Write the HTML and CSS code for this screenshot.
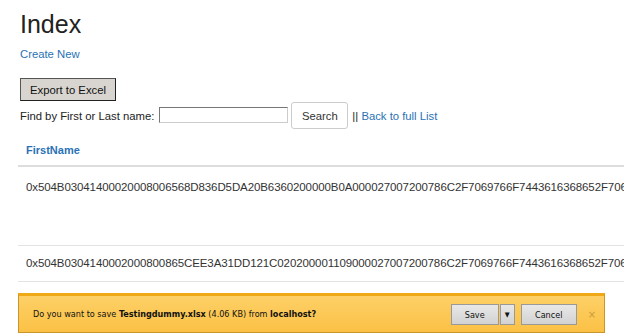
FILE: index.html
```html
<!DOCTYPE html>
<html>
    <head>
        <title>Index</title>
        <link rel="stylesheet" href="styles.css">
    </head>
    <body>
        <div class="body-content">
            <h2 class="title">Index</h2>
            <p class="create"><a href="#">Create New</a></p>

            <form class="export-form">
                <button type="button" class="export-btn">Export to Excel</button>
            </form>
            <form class="search-form">
                <span>Find by First or Last name:</span>
                <input type="text" class="search-box">
                <button type="button" class="search-btn">Search</button>
                <span class="sep">|| <a href="#">Back to full List</a></span>
            </form>

            <table class="grid">
                <tr>
                    <th><a href="#">FirstName</a></th>
                </tr>
                <tr class="first">
                    <td>0x504B03041400020008006568D836D5DA20B6360200000B0A000027007200786C2F7069766F7443616368652F7069766F7443616368654465</td>
                </tr>
                <tr class="second">
                    <td>0x504B0304140002000800865CEE3A31DD121C020200001109000027007200786C2F7069766F7443616368652F7069766F7443616368654465</td>
                </tr>
            </table>
        </div>

        <div class="notify">
            <div class="notify-text">Do you want to save <b>Testingdummy.xlsx</b> (4.06 KB) from <b>localhost?</b></div>
            <div class="notify-buttons">
                <span class="nbtn save">Save</span><span class="nbtn drop">&#9660;</span>
                <span class="nbtn cancel">Cancel</span>
                <span class="close">&#215;</span>
            </div>
        </div>
    </body>
</html>
```

FILE: styles.css
```css
body {
    margin: 0;
    font-family: "Liberation Sans", Arial, sans-serif;
    font-size: 11.3px;
    color: #333;
    background: #fff;
    overflow: hidden;
    width: 624px;
    height: 335px;
    position: relative;
}
a {
    color: #2a72b5;
    text-decoration: none;
}
.body-content {
    padding-left: 20px;
}
.title {
    margin: 8px 0 0;
    font-size: 25px;
    font-weight: normal;
    line-height: 32px;
    color: #222;
}
.create {
    margin: 6px 0 0;
    line-height: 16px;
}
.export-form {
    margin-top: 16px;
}
.export-btn {
    font-family: "Liberation Sans", Arial, sans-serif;
    font-size: 11.3px;
    color: #111;
    background: #d8d5d0;
    border: 1px solid #555;
    border-right-color: #222;
    border-bottom-color: #222;
    height: 23px;
    width: 96px;
    padding: 0;
    display: block;
}
.search-form {
    margin-top: 1px;
    display: flex;
    align-items: center;
    height: 27px;
    color: #222;
}
.search-box {
    width: 129px;
    height: 14px;
    border: 1px solid #777;
    border-right-color: #ccc;
    border-bottom-color: #ccc;
    margin: -1px 3px 0 5px;
    padding: 0;
    box-sizing: border-box;
    height: 16px;
}
.search-btn {
    font-family: "Liberation Sans", Arial, sans-serif;
    font-size: 11.3px;
    color: #333;
    background: #fff;
    border: 1px solid #ccc;
    border-radius: 3px;
    width: 57px;
    height: 27px;
    padding: 0;
    margin-right: 4px;
}
.grid {
    margin-top: 8px;
    margin-left: -2px;
    border-collapse: collapse;
    white-space: nowrap;
}
.grid th {
    text-align: left;
    padding: 7px 8px 9px;
    border-bottom: 2px solid #ddd;
    font-size: 11px;
}
.grid td {
    padding: 14px 8px 12px;
    vertical-align: top;
    border-bottom: 1px solid #e4e4e4;
    font-size: 11.5px;
    letter-spacing: -0.1px;
}
.grid .first td {
    height: 52px;
}
.grid .second td {
    padding-top: 11px;
}
.notify {
    position: absolute;
    left: 18px;
    top: 293px;
    width: 587px;
    height: 40px;
    box-sizing: border-box;
    border: 1px solid #c9962e;
    border-top: 3px solid #f0a916;
    background: linear-gradient(#fdd067, #fbc145);
    display: flex;
    align-items: center;
    justify-content: space-between;
    font-family: "DejaVu Sans Condensed", "DejaVu Sans", sans-serif;
    font-stretch: condensed;
    font-size: 9px;
    color: #111;
    padding: 0 8px 0 14px;
}
.notify-buttons {
    display: flex;
    align-items: center;
}
.nbtn {
    display: inline-block;
    height: 21px;
    line-height: 21px;
    background: linear-gradient(#e8e8e8, #d2d2d2);
    border: 1px solid #999;
    box-sizing: border-box;
    text-align: center;
}
.save {
    width: 48px;
}
.drop {
    width: 15px;
    margin-left: 1px;
    font-size: 7px;
}
.cancel {
    width: 56px;
    margin-left: 6px;
}
.close {
    margin-left: 11px;
    color: #c99a3a;
    font-size: 11px;
}
```
